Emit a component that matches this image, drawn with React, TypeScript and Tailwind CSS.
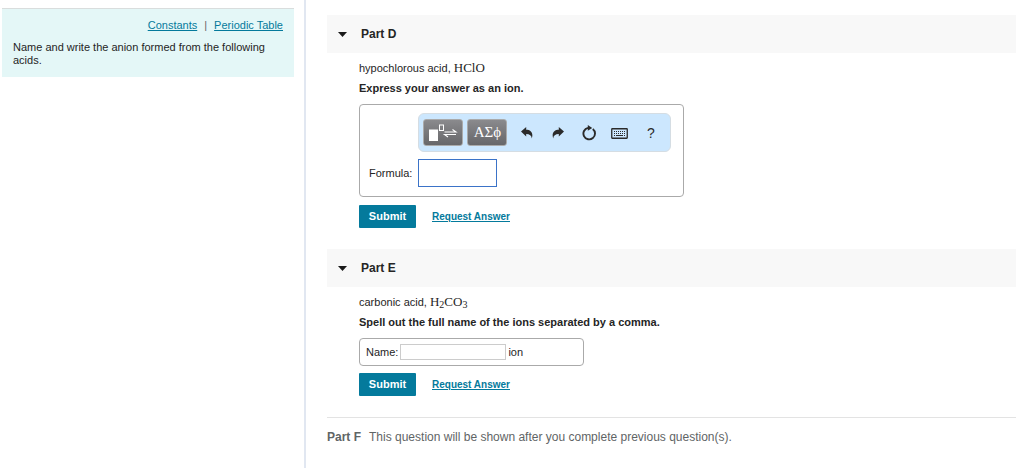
import React from "react";

type PartProps = {
  title: string;
  compound: React.ReactNode;
  instruction: string;
  children: React.ReactNode;
};

type IconButtonProps = {
  label: string;
  children: React.ReactNode;
};

function IconButton({ label, children }: IconButtonProps) {
  return (
    <button
      type="button"
      aria-label={label}
      className="flex h-7 w-[31px] items-center justify-center text-[#2b2b2b]"
    >
      {children}
    </button>
  );
}

function TemplateIcon() {
  return (
    <svg width="30" height="20" viewBox="0 0 30 20" fill="none" className="shrink-0" aria-hidden="true">
      <rect x="1" y="6.5" width="9" height="11.5" fill="#fff" />
      <rect x="11.5" y="2" width="4" height="5.5" stroke="#fff" />
      <path d="M16.5 9H28l-3.5-2.5M28 11.5H16.5L20 14" stroke="#fff" strokeWidth="1.1" />
    </svg>
  );
}

function ArrowIcon({ flip = false }: { flip?: boolean }) {
  return (
    <svg
      width="12"
      height="12"
      viewBox="0 0 12 12"
      fill="currentColor"
      className={flip ? "-scale-x-100" : undefined}
      aria-hidden="true"
    >
      <path d="M0 4.6 5.2 0V2.8C9.8 2.8 12.6 6 10.8 11.4 10.6 8.4 8.7 6.9 5.2 6.9V9.4Z" />
    </svg>
  );
}

function ResetIcon() {
  return (
    <svg width="14" height="16" viewBox="0 0 14 16" fill="none" aria-hidden="true">
      <path d="M10.8 4A5.8 5.8 0 1 1 6 2.9" stroke="currentColor" strokeWidth="1.9" />
      <path d="M5.8 0v5.8L10.2 3Z" fill="currentColor" />
    </svg>
  );
}

function KeyboardIcon() {
  return (
    <svg width="17" height="11" viewBox="0 0 17 11" fill="none" className="mt-0.5" aria-hidden="true">
      <rect x="0.75" y="0.75" width="15.5" height="9.5" rx="0.5" stroke="currentColor" strokeWidth="1.3" />
      <path d="M3 3.5h11M3 5.5h11" stroke="currentColor" strokeDasharray="1 1" />
      <path d="M3 7.5h1M5 7.5h7M13 7.5h1" stroke="currentColor" />
    </svg>
  );
}

function Toolbar() {
  return (
    <div className="flex h-[39px] items-center rounded-md border border-[#d5dde3] bg-[#cce7fe] px-1">
      <div className="mr-1 flex gap-1">
        <button
          type="button"
          aria-label="Templates"
          className="flex h-[27px] w-10 items-center justify-center rounded-[3px] border border-[#aaa] bg-linear-to-b from-[#8a8a8d] to-[#67676a]"
        >
          <TemplateIcon />
        </button>
        <button
          type="button"
          aria-label="Greek symbols"
          className="flex h-[27px] w-10 items-center justify-center rounded-[3px] border border-[#aaa] bg-linear-to-b from-[#8a8a8d] to-[#67676a] font-['Liberation_Serif',serif] text-[15px] text-white"
        >
          ΑΣϕ
        </button>
      </div>
      <IconButton label="Undo"><ArrowIcon /></IconButton>
      <IconButton label="Redo"><ArrowIcon flip /></IconButton>
      <IconButton label="Reset"><ResetIcon /></IconButton>
      <IconButton label="Keyboard shortcuts"><KeyboardIcon /></IconButton>
      <IconButton label="Help"><span className="text-sm">?</span></IconButton>
    </div>
  );
}

function SubmitRow() {
  return (
    <div className="flex items-center gap-4">
      <button type="submit" className="h-[23px] w-[57px] rounded-[1px] bg-[#047a9c] text-[11px] font-bold text-white">
        Submit
      </button>
      <a href="#answer" className="text-[10px] leading-3 font-bold text-[#047a9c] underline">
        Request Answer
      </a>
    </div>
  );
}

function Part({ title, compound, instruction, children }: PartProps) {
  return (
    <section className="mb-[21px]">
      <h2>
        <button
          type="button"
          aria-expanded="true"
          className="flex h-[38px] w-full items-center gap-3.5 bg-[#f8f8f8] pl-[11px] text-left text-xs font-bold"
        >
          <svg width="9" height="5" viewBox="0 0 9 5" aria-hidden="true">
            <path d="M0 0h9L4.5 5Z" fill="#1a1a1a" />
          </svg>
          {title}
        </button>
      </h2>
      <form className="pt-[5px] pl-8" onSubmit={(e) => e.preventDefault()}>
        <p className="leading-5">{compound}</p>
        <p className="mb-1.5 leading-5 font-bold">{instruction}</p>
        {children}
        <SubmitRow />
      </form>
    </section>
  );
}

export default function App() {
  return (
    <div className="flex min-h-screen bg-white font-['Liberation_Sans',Arial,sans-serif] text-[11px] text-[#252525]">
      <aside className="w-[306px] shrink-0 border-r-2 border-[#e1e7f1] pt-2 pr-2.5 pl-0.5">
        <div className="border-t border-[#d9dddd] bg-[#e4f7f7] px-[11px] pt-2.5 pb-2.5">
          <nav className="mb-[9px] flex justify-end gap-[7px] leading-[13px]">
            <a href="#constants" className="text-[#047a9c] underline">Constants</a>
            <span className="text-[#666]">|</span>
            <a href="#periodic-table" className="text-[#047a9c] underline">Periodic Table</a>
          </nav>
          <p className="leading-[13px]">Name and write the anion formed from the following acids.</p>
        </div>
      </aside>

      <main className="min-w-0 grow pt-[15px] pr-2 pl-[21px]">
        <Part
          title="Part D"
          compound={<>hypochlorous acid, <span className="font-['Liberation_Serif',serif] text-[13px]">HClO</span></>}
          instruction="Express your answer as an ion."
        >
          <div className="mb-2 w-fit rounded-[4px] border border-[#aaa] pt-2 pr-3 pb-[9px] pl-[9px]">
            <div className="grid grid-cols-[auto_1fr] items-center gap-x-1.5 gap-y-[7px]">
              <div className="col-start-2">
                <Toolbar />
              </div>
              <label htmlFor="formula">Formula:</label>
              <input id="formula" type="text" className="h-7 w-[79px] border border-[#3b73c8] px-1 outline-none" />
            </div>
          </div>
        </Part>

        <Part
          title="Part E"
          compound={
            <>
              carbonic acid,{" "}
              <span className="font-['Liberation_Serif',serif] text-[13px]">
                H<sub className="bottom-[-2px] text-[10px]">2</sub>CO<sub className="bottom-[-2px] text-[10px]">3</sub>
              </span>
            </>
          }
          instruction="Spell out the full name of the ions separated by a comma."
        >
          <div className="mb-[7px] flex h-7 w-[225px] items-center gap-0.5 rounded-[4px] border border-[#aaa] px-1.5">
            <label htmlFor="anion-name">Name:</label>
            <input id="anion-name" type="text" className="h-4 w-[106px] border border-[#ccc] px-1 outline-none" />
            <span>ion</span>
          </div>
        </Part>

        <p className="border-t border-[#e3e3e3] pt-[9px] text-xs leading-5 text-[#5f6566]">
          <span className="mr-2 font-bold">Part F</span>
          This question will be shown after you complete previous question(s).
        </p>
      </main>
    </div>
  );
}
